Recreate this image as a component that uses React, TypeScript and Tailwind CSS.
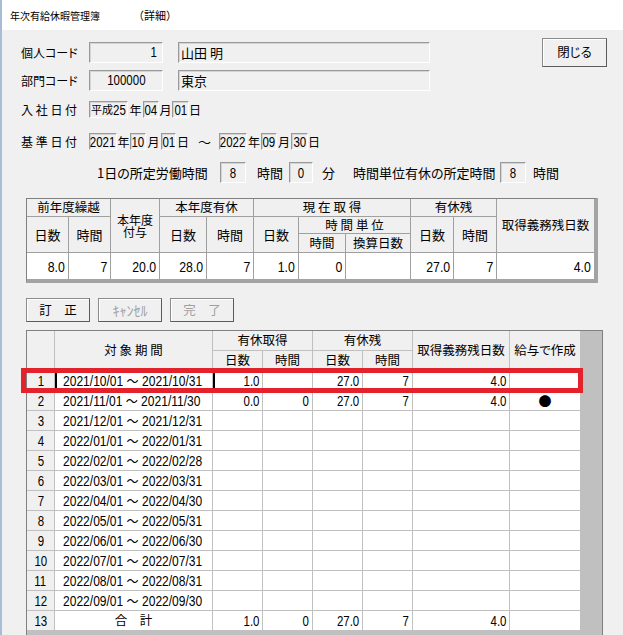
import React from "react";

const JP = "font-['Noto_Sans_CJK_JP',sans-serif]";
const NUM = "font-['Liberation_Sans','Noto_Sans_CJK_JP',sans-serif]";
const SUNK =
  "border border-t-[#9a9a9a] border-l-[#9a9a9a] border-r-[#ffffff] border-b-[#ffffff] shadow-[inset_1px_1px_0_#d4d4d4] flex items-center whitespace-nowrap shrink-0";
const BTN =
  "flex items-center justify-center border border-[#8c8c8c] border-r-[#5c5c5c] border-b-[#5c5c5c] shadow-[inset_1px_1px_0_#ffffff] bg-[#f0f0f0]";

const SH = "bg-[#f0f0f0] flex items-center justify-center text-[12.5px] leading-none";
const SD = "bg-white flex items-center justify-end pr-[3px] text-[15px] leading-none overflow-visible";
const MH = "bg-[#f0f0f0] flex items-center justify-center text-[12.5px] leading-none";
const MD = "bg-white flex items-center justify-end pr-[3px] text-[14px] leading-none";

function N({ children, o, wide }: { children?: React.ReactNode; o: "l" | "r" | "c"; wide?: boolean }) {
  const origin = o === "l" ? "origin-left" : o === "r" ? "origin-right" : "origin-center";
  const sc = wide ? "scale-x-[0.86]" : "scale-x-[0.82]";
  return <span className={`inline-block whitespace-nowrap ${sc} ${origin} ${NUM}`}>{children}</span>;
}

type Row = {
  no: string;
  period: string;
  d1: string;
  t1: string;
  d2: string;
  t2: string;
  rem: string;
  mark: string;
};

const periods = [
  "2021/10/01 ～ 2021/10/31",
  "2021/11/01 ～ 2021/11/30",
  "2021/12/01 ～ 2021/12/31",
  "2022/01/01 ～ 2022/01/31",
  "2022/02/01 ～ 2022/02/28",
  "2022/03/01 ～ 2022/03/31",
  "2022/04/01 ～ 2022/04/30",
  "2022/05/01 ～ 2022/05/31",
  "2022/06/01 ～ 2022/06/30",
  "2022/07/01 ～ 2022/07/31",
  "2022/08/01 ～ 2022/08/31",
  "2022/09/01 ～ 2022/09/30",
];

const rows: Row[] = periods.map((p, i) => {
  if (i === 0) return { no: "1", period: p, d1: "1.0", t1: "", d2: "27.0", t2: "7", rem: "4.0", mark: "" };
  if (i === 1) return { no: "2", period: p, d1: "0.0", t1: "0", d2: "27.0", t2: "7", rem: "4.0", mark: "●" };
  return { no: String(i + 1), period: p, d1: "", t1: "", d2: "", t2: "", rem: "", mark: "" };
});

export default function App() {
  return (
    <div
      className={`w-[623px] h-[635px] overflow-hidden bg-[#f0f0f0] flex text-black [font-feature-settings:'palt'] ${JP}`}
    >
      <div className="w-[2px] shrink-0 bg-[#a9bcd6]" />
      <div className="flex-1 flex flex-col relative">
        {/* title bar */}
        <div className="h-[30px] bg-white flex items-center pl-[8px] shrink-0 [font-feature-settings:normal] whitespace-nowrap">
          <span className="text-[10px]">年次有給休暇管理簿</span>
          <span className="text-[11px] ml-[33px]">（詳細）</span>
        </div>

        <div className="flex flex-col pl-[19px]">
          {/* Row A */}
          <div className="flex items-center h-[29px] mt-[8px]">
            <div className="w-[68px] text-[12px] leading-none">個人コード</div>
            <div className={`${SUNK} w-[74px] h-[21px] justify-end pr-[5px] text-[14px]`}>
              <N o="r">1</N>
            </div>
            <div className={`${SUNK} w-[252px] h-[21px] ml-[15px] pl-[2px] text-[13px]`}>山田 明</div>
            <div className={`${BTN} w-[65px] h-[29px] ml-[112px] text-[12.5px]`}>閉じる</div>
          </div>

          {/* Row B */}
          <div className="flex items-center h-[21px] mt-[3px]">
            <div className="w-[68px] text-[12px] leading-none">部門コード</div>
            <div className={`${SUNK} w-[74px] h-[21px] justify-center text-[14px]`}>
              <N o="c">100000</N>
            </div>
            <div className={`${SUNK} w-[252px] h-[21px] ml-[15px] pl-[2px] text-[13px]`}>東京</div>
          </div>

          {/* Row C */}
          <div className="flex items-center h-[17px] mt-[10px] text-[12px] leading-none">
            <div className="w-[68px]">入 社 日 付</div>
            <div className={`${SUNK} w-[39px] h-[17px] justify-start pl-[1px]`}>
              <span className="text-[11px]">平成</span>
              <span className="text-[14px] w-[13px] overflow-visible">
                <N o="l">25</N>
              </span>
            </div>
            <span className="w-[15px] text-center">年</span>
            <div className={`${SUNK} w-[16px] h-[17px] justify-center text-[14px]`}>
              <N o="c">04</N>
            </div>
            <span className="w-[13px] text-center">月</span>
            <div className={`${SUNK} w-[17px] h-[17px] justify-center text-[14px]`}>
              <N o="c">01</N>
            </div>
            <span className="w-[12px] text-center">日</span>
          </div>

          {/* Row D */}
          <div className="flex items-center h-[17px] mt-[15px] text-[12px] leading-none">
            <div className="w-[68px]">基 準 日 付</div>
            <div className={`${SUNK} w-[28px] h-[17px] justify-center text-[14px]`}>
              <N o="c">2021</N>
            </div>
            <span className="w-[13px] text-center">年</span>
            <div className={`${SUNK} w-[16px] h-[17px] justify-center text-[14px]`}>
              <N o="c">10</N>
            </div>
            <span className="w-[15px] text-center">月</span>
            <div className={`${SUNK} w-[15px] h-[17px] justify-center text-[14px]`}>
              <N o="c">01</N>
            </div>
            <span className="w-[14px] text-center">日</span>
            <span className="w-[29px] text-center text-[13px]">～</span>
            <div className={`${SUNK} w-[28px] h-[17px] justify-center text-[14px]`}>
              <N o="c">2022</N>
            </div>
            <span className="w-[14px] text-center">年</span>
            <div className={`${SUNK} w-[16px] h-[17px] justify-center text-[14px]`}>
              <N o="c">09</N>
            </div>
            <span className="w-[14px] text-center">月</span>
            <div className={`${SUNK} w-[17px] h-[17px] justify-center text-[14px]`}>
              <N o="c">30</N>
            </div>
            <span className="w-[12px] text-center">日</span>
          </div>

          {/* Row E */}
          <div className="flex items-center h-[21px] mt-[12px] ml-[76px] text-[13px] leading-none whitespace-nowrap">
            <span className="w-[123px] shrink-0">1日の所定労働時間</span>
            <div className={`${SUNK} w-[26px] h-[21px] justify-center text-[14px]`}>
              <N o="c">8</N>
            </div>
            <span className="w-[43px] pl-[11px] shrink-0">時間</span>
            <div className={`${SUNK} w-[24px] h-[21px] justify-center text-[14px]`}>
              <N o="c">0</N>
            </div>
            <span className="w-[40px] pl-[9px] shrink-0">分</span>
            <span className="w-[147px] shrink-0">時間単位有休の所定時間</span>
            <div className={`${SUNK} w-[26px] h-[21px] justify-center text-[14px]`}>
              <N o="c">8</N>
            </div>
            <span className="pl-[7px]">時間</span>
          </div>

          {/* Summary table */}
          <div className="ml-[5px] mt-[15px] w-fit grid grid-cols-[41px_41px_48px_46px_46px_44px_46px_64px_42px_42px_97px] grid-rows-[17px_16px_18px_26px] gap-px bg-[#a0a0a0] border-t border-l border-t-[#808080] border-l-[#808080] border-r-4 border-b-4 border-r-[#a3a3a3] border-b-[#a3a3a3]">
            <div className={`${SH} col-start-1 col-span-2 row-start-1`}>前年度繰越</div>
            <div className="bg-[#f0f0f0] col-start-3 row-start-1 row-span-3 flex items-center justify-center text-center text-[12px] leading-[12px]">
              <span>
                本年度
                <br />
                付与
              </span>
            </div>
            <div className={`${SH} col-start-4 col-span-2 row-start-1`}>本年度有休</div>
            <div className={`${SH} col-start-6 col-span-3 row-start-1`}>現 在 取 得</div>
            <div className={`${SH} col-start-9 col-span-2 row-start-1`}>有休残</div>
            <div className={`${SH} col-start-11 row-start-1 row-span-3`}>取得義務残日数</div>

            <div className={`${SH} col-start-1 row-start-2 row-span-2 text-[13px]`}>日数</div>
            <div className={`${SH} col-start-2 row-start-2 row-span-2 text-[13px]`}>時間</div>
            <div className={`${SH} col-start-4 row-start-2 row-span-2 text-[13px]`}>日数</div>
            <div className={`${SH} col-start-5 row-start-2 row-span-2 text-[13px]`}>時間</div>
            <div className={`${SH} col-start-6 row-start-2 row-span-2 text-[13px]`}>日数</div>
            <div className={`${SH} col-start-7 col-span-2 row-start-2`}>時 間 単 位</div>
            <div className={`${SH} col-start-9 row-start-2 row-span-2 text-[13px]`}>日数</div>
            <div className={`${SH} col-start-10 row-start-2 row-span-2 text-[13px]`}>時間</div>
            <div className={`${SH} col-start-7 row-start-3`}>時間</div>
            <div className={`${SH} col-start-8 row-start-3`}>換算日数</div>

            <div className={`${SD} col-start-1 row-start-4`}><N o="r">8.0</N></div>
            <div className={`${SD} col-start-2 row-start-4`}><N o="r">7</N></div>
            <div className={`${SD} col-start-3 row-start-4`}><N o="r">20.0</N></div>
            <div className={`${SD} col-start-4 row-start-4`}><N o="r">28.0</N></div>
            <div className={`${SD} col-start-5 row-start-4`}><N o="r">7</N></div>
            <div className={`${SD} col-start-6 row-start-4`}><N o="r">1.0</N></div>
            <div className={`${SD} col-start-7 row-start-4`}><N o="r">0</N></div>
            <div className={`${SD} col-start-8 row-start-4`}></div>
            <div className={`${SD} col-start-9 row-start-4`}><N o="r">27.0</N></div>
            <div className={`${SD} col-start-10 row-start-4`}><N o="r">7</N></div>
            <div className={`${SD} col-start-11 row-start-4`}><N o="r">4.0</N></div>
          </div>

          {/* Buttons */}
          <div className="ml-[5px] mt-[15px] flex gap-[8px]">
            <div className={`${BTN} w-[64px] h-[24px] text-[12.5px]`}>訂　正</div>
            <div className={`${BTN} w-[64px] h-[24px] text-[14px] text-[#a0a0a0] [font-feature-settings:normal]`}>ｷｬﾝｾﾙ</div>
            <div className={`${BTN} w-[64px] h-[24px] text-[12.5px] text-[#a0a0a0]`}>完　了</div>
          </div>

          {/* Main table */}
          <div className="ml-[5px] mt-[8px] w-[577px] h-[400px] flex items-start bg-[#c0c0c0] border-t border-l border-r border-[#808080]">
            <div className="grid grid-cols-[27px_157px_49px_49px_49px_49px_96px_70px] auto-rows-[19px] gap-px bg-[#c0c0c0] pb-px">
              <div className={`${MH} col-start-1 row-start-1 row-span-2`}></div>
              <div className={`${MH} col-start-2 row-start-1 row-span-2`}>対 象 期 間</div>
              <div className={`${MH} col-start-3 col-span-2 row-start-1`}>有休取得</div>
              <div className={`${MH} col-start-5 col-span-2 row-start-1`}>有休残</div>
              <div className={`${MH} col-start-7 row-start-1 row-span-2`}>取得義務残日数</div>
              <div className={`${MH} col-start-8 row-start-1 row-span-2`}>給与で作成</div>
              <div className={`${MH} col-start-3 row-start-2`}>日数</div>
              <div className={`${MH} col-start-4 row-start-2`}>時間</div>
              <div className={`${MH} col-start-5 row-start-2`}>日数</div>
              <div className={`${MH} col-start-6 row-start-2`}>時間</div>

              {rows.map((r, i) => (
                <React.Fragment key={r.no}>
                  <div className="bg-[#f0f0f0] flex items-center justify-center text-[14px] leading-none">
                    <N o="c">{r.no}</N>
                  </div>
                  <div className="relative bg-white flex items-center pl-[8px] text-[14px] leading-none overflow-hidden">
                    {i === 0 && <div className="absolute left-0 top-0 bottom-0 w-[2px] bg-black" />}
                    <N o="l" wide>
                      {r.period}
                    </N>
                  </div>
                  <div className={`${MD} relative`}>
                    {i === 0 && <div className="absolute left-0 top-0 bottom-0 w-[2px] bg-black" />}
                    <N o="r">{r.d1}</N>
                  </div>
                  <div className={MD}><N o="r">{r.t1}</N></div>
                  <div className={MD}><N o="r">{r.d2}</N></div>
                  <div className={MD}><N o="r">{r.t2}</N></div>
                  <div className={MD}><N o="r">{r.rem}</N></div>
                  <div className="bg-white flex items-center justify-center text-[13px] leading-none">
                    {r.mark}
                  </div>
                </React.Fragment>
              ))}

              <div className="bg-[#f0f0f0] flex items-center justify-center text-[14px] leading-none">
                <N o="c">13</N>
              </div>
              <div className="bg-white flex items-center justify-center text-[12.5px] leading-none">合　計</div>
              <div className={MD}><N o="r">1.0</N></div>
              <div className={MD}><N o="r">0</N></div>
              <div className={MD}><N o="r">27.0</N></div>
              <div className={MD}><N o="r">7</N></div>
              <div className={MD}><N o="r">4.0</N></div>
              <div className="bg-white"></div>
            </div>
          </div>
        </div>

        {/* red highlight overlay */}
        <div className="absolute left-[19px] top-[368px] w-[562px] h-[25px] border-[5px] border-[#e3222c] pointer-events-none" />
      </div>
    </div>
  );
}
